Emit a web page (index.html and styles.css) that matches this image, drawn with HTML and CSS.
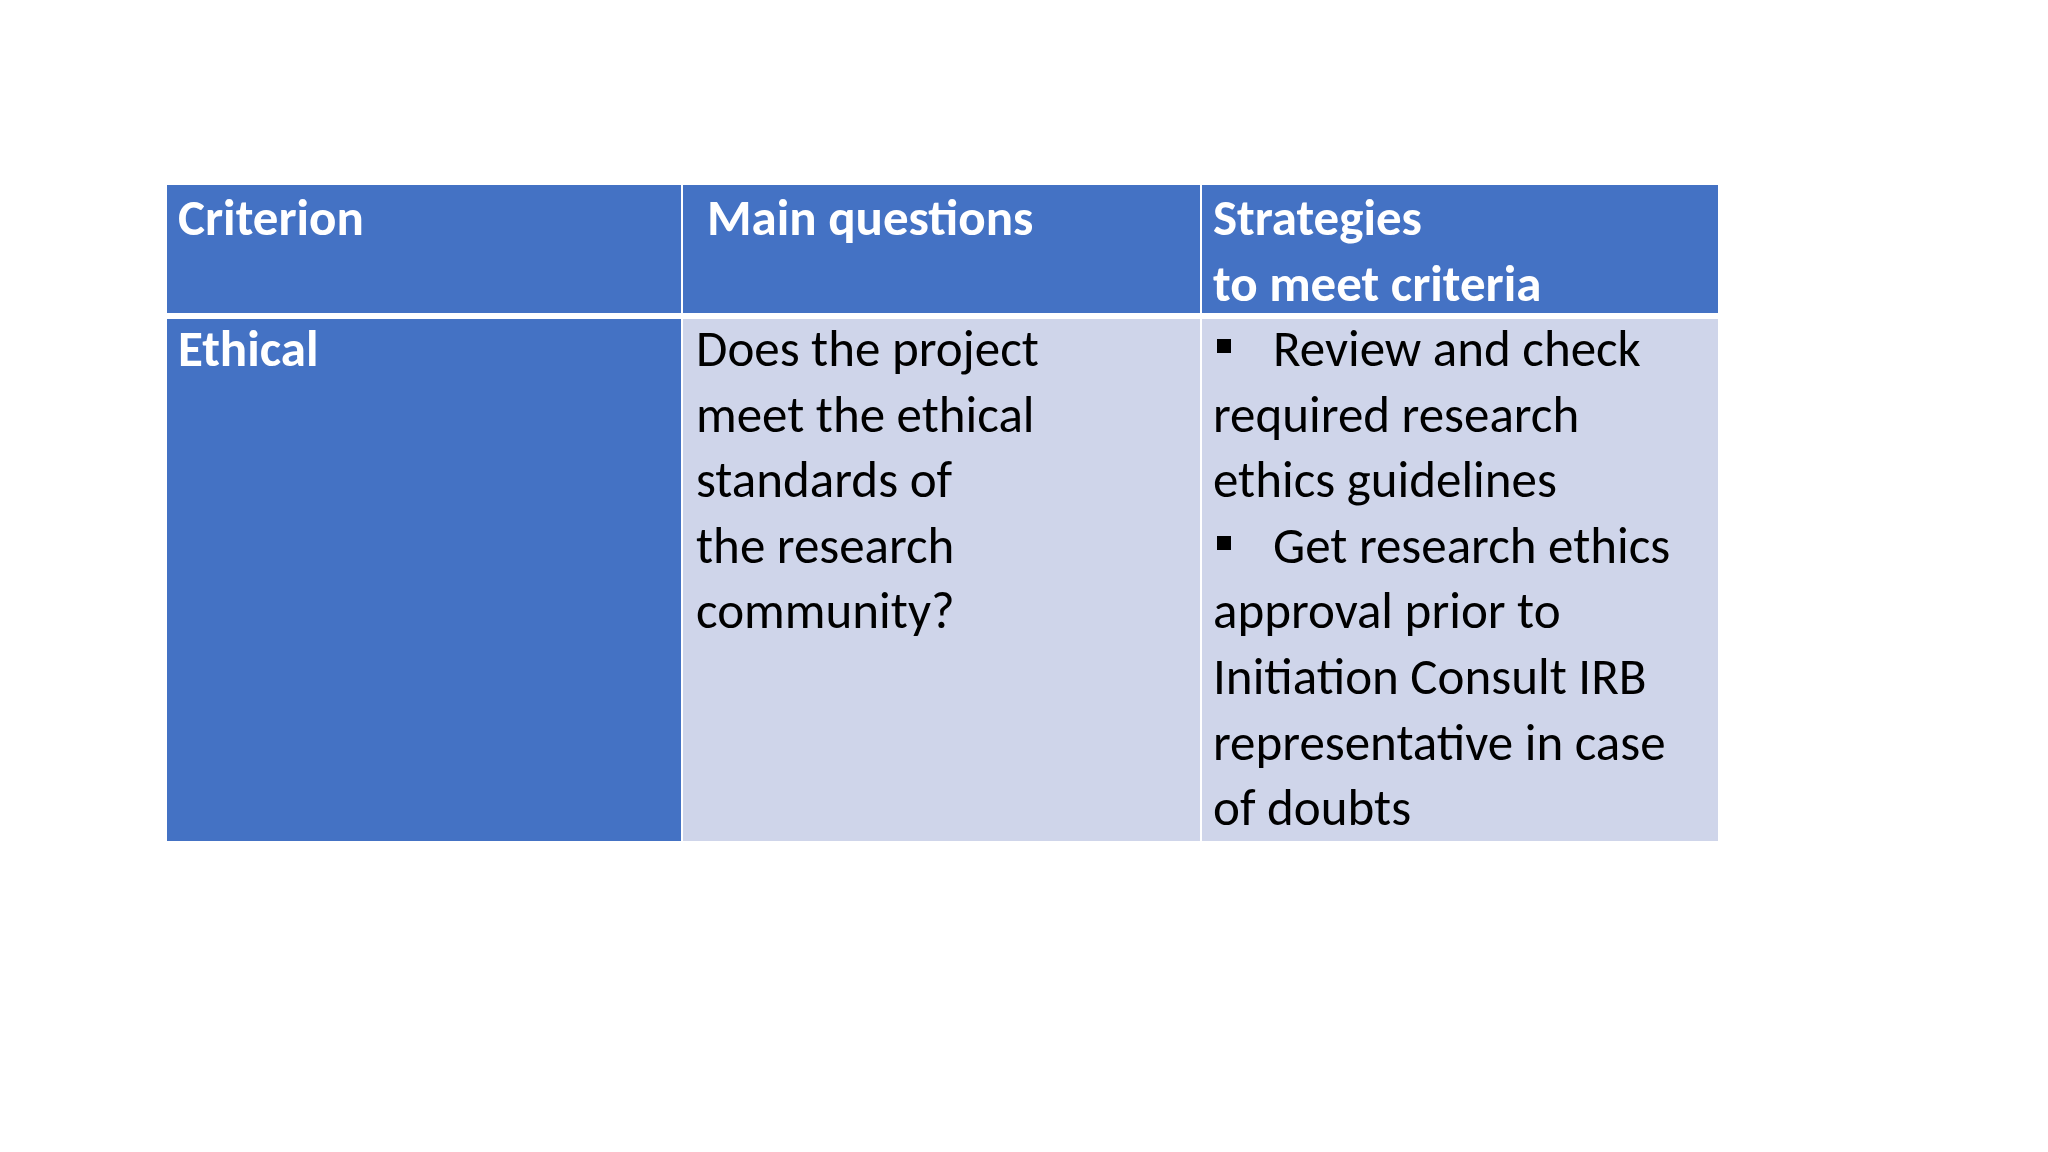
FILE: index.html
```html
<!DOCTYPE html>
<html lang="en">
<head>
<meta charset="utf-8">
<title>Criteria table</title>
<link rel="stylesheet" href="styles.css">
</head>
<body>
<div class="slide">
  <div class="table">
    <div class="cell head">Criterion</div>
    <div class="cell head indent-head">Main questions</div>
    <div class="cell head">Strategies<br>to meet criteria</div>
    <div class="cell side"><div class="txt">Ethical</div></div>
    <div class="cell body indent-body"><div class="txt">Does the project<br>meet the ethical<br>standards of<br>the research<br>community?</div></div>
    <div class="cell body">
      <div class="txt">
        <div class="item"><span class="bullet"></span><span class="lead">Review and check</span></div>
        required research<br>ethics guidelines
        <div class="item"><span class="bullet"></span><span class="lead">Get research ethics</span></div>
        approval prior to<br>Initiation Consult IRB<br>representative in case<br>of doubts
      </div>
    </div>
  </div>
</div>
</body>
</html>
```
FILE: styles.css
```css
html, body {
  margin: 0;
  padding: 0;
  background: #ffffff;
}
.slide {
  width: 2048px;
  height: 1152px;
  padding: 185px 0 0 167px;
  box-sizing: border-box;
}
.table {
  display: grid;
  grid-template-columns: 514px 517px 516px;
  grid-template-rows: 128px 522px;
  column-gap: 2px;
  row-gap: 6px;
  width: 1551px;
}
.cell {
  font-family: "Carlito", "Lato", "Open Sans", sans-serif;
  font-size: 51px;
  line-height: 65.6px;
  padding: 0 10px 0 11px;
  box-sizing: border-box;
  white-space: nowrap;
}
.txt {
  margin-top: -3px;
}
.head {
  background: #4472c4;
  color: #ffffff;
  font-weight: bold;
}
.side {
  background: #4472c4;
  color: #ffffff;
  font-weight: bold;
}
.body {
  background: #cfd5ea;
  color: #000000;
}
.indent-head {
  padding-left: 24px;
}
.indent-body {
  padding-left: 13px;
}
.item {
  display: flex;
  align-items: center;
}
.bullet {
  display: inline-block;
  width: 14px;
  height: 14px;
  background: #000000;
  margin: 0 42px 5px 4px;
  flex: none;
}
```
